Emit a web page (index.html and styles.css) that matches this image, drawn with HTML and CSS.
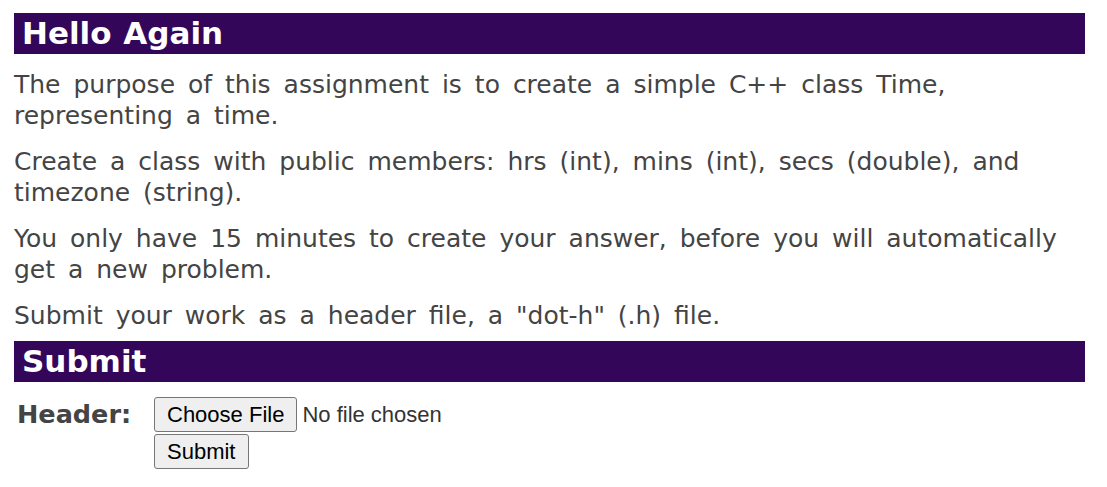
FILE: index.html
```html
<!DOCTYPE html>
<html lang="en">
<head>
<meta charset="utf-8">
<title>Hello Again</title>
<link rel="stylesheet" href="styles.css">
</head>
<body>
<h2 class="bar">Hello Again</h2>
<p class="text">The purpose of this assignment is to create a simple C++ class Time, representing a time.</p>
<p class="text">Create a class with public members: hrs (int), mins (int), secs (double), and timezone (string).</p>
<p class="text">You only have 15 minutes to create your answer, before you will automatically get a new problem.</p>
<p class="text last">Submit your work as a header file, a "dot-h" (.h) file.</p>
<h2 class="bar">Submit</h2>
<form class="form">
  <div class="label">Header:</div>
  <div class="controls">
    <input class="file" type="file" name="header">
    <button class="btn" type="button">Submit</button>
  </div>
</form>
</body>
</html>
```
FILE: styles.css
```css
html, body {
  margin: 0;
  padding: 0;
  background: #fff;
}
body {
  padding: 13px 22px 0 14px;
  font-family: "DejaVu Sans", Verdana, sans-serif;
  color: #444;
}
.bar {
  margin: 0;
  background: #33065a;
  color: #fff;
  font-size: 31px;
  font-weight: bold;
  line-height: 41px;
  height: 41px;
  padding: 0 0 0 8px;
  word-spacing: 1px;
}
.text {
  font-size: 25px;
  line-height: 31px;
  word-spacing: 5px;
  margin: 15px 0 14px 0;
}
.text.last {
  margin-bottom: 10px;
}
.form {
  display: flex;
  align-items: flex-start;
  padding: 15px 0 0 3px;
}
.label {
  font-size: 25.5px;
  font-weight: bold;
  width: 137px;
  line-height: 35px;
}
.controls {
  display: flex;
  flex-direction: column;
  align-items: flex-start;
  gap: 2px;
}
.file {
  font-family: "Liberation Sans", Arial, sans-serif;
  font-size: 22px;
  color: #333;
}
.file::file-selector-button,
.btn {
  font-family: "Liberation Sans", Arial, sans-serif;
  font-size: 22px;
  color: #000;
  background: #efefef;
  border: 1px solid #767676;
  border-radius: 3px;
  height: 35px;
  padding: 0 12px;
  margin: 0 5px 0 0;
}
.btn {
  margin: 0;
  padding: 0 13px 0 12px;
}
```
